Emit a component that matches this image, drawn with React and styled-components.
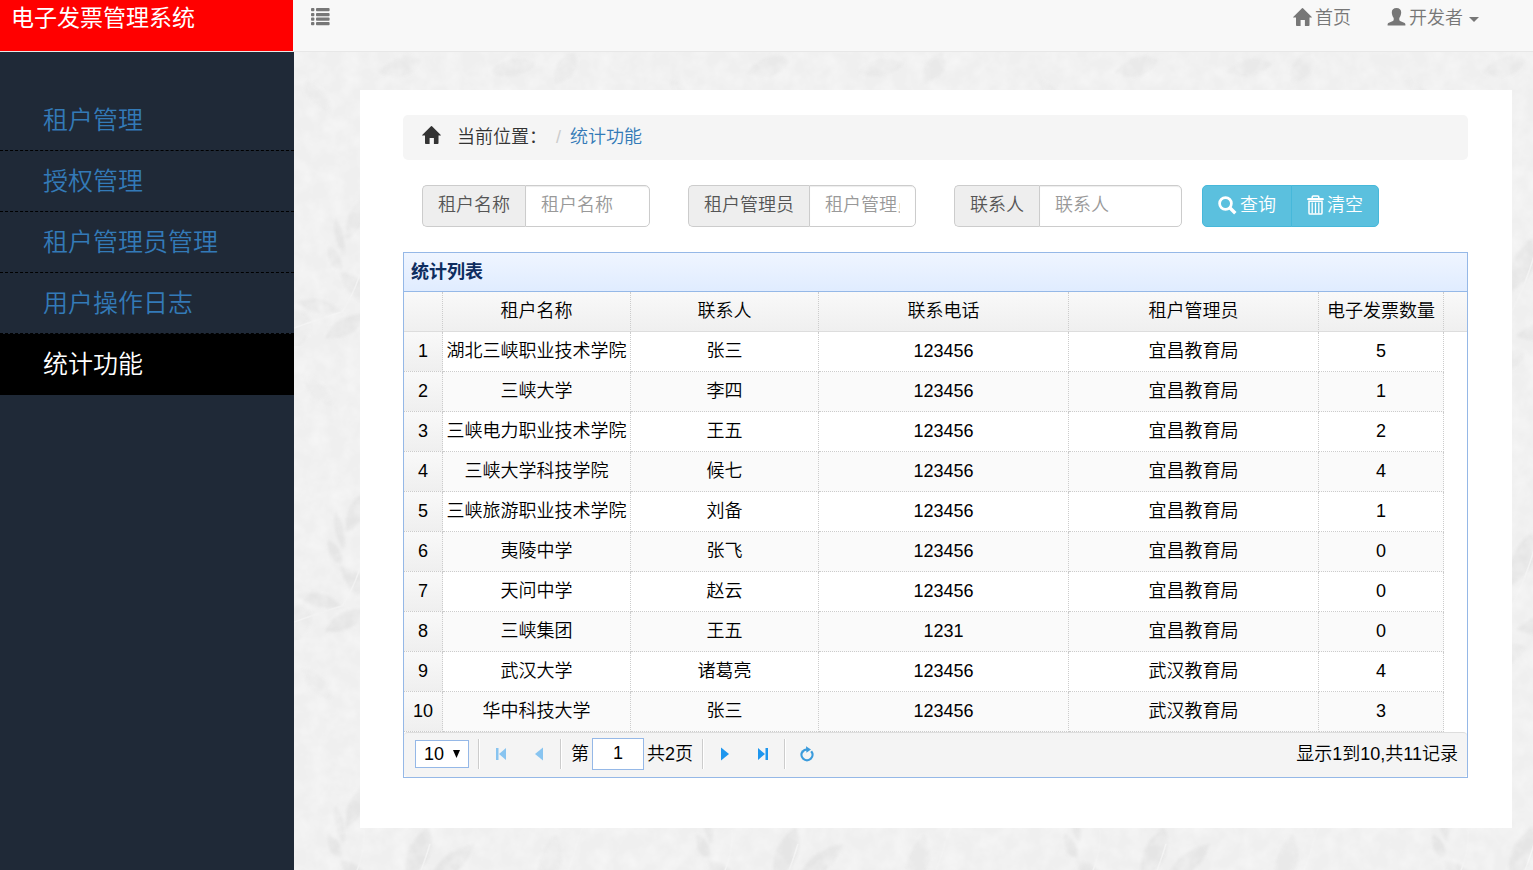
import React, { useState } from "react";
import styled, { createGlobalStyle } from "styled-components";

////////////////////////////////////////////////////////////////////////////////////////////
// Styles

const GlobalStyle = createGlobalStyle`
  * {
    box-sizing: border-box;
  }
  body {
    margin: 0;
    color: #333;
    font-family: "Liberation Sans", "Noto Sans CJK SC", sans-serif;
    font-size: 18px;
    font-weight: 350;
    line-height: 26px;
  }
  a {
    text-decoration: none;
  }
  button, input, select {
    font: inherit;
  }
`;

const Page = styled.div`
  display: flex;
  flex-direction: column;
  min-height: 100vh;
`;

const Header = styled.header`
  display: flex;
  height: 52px;
  background-color: #f8f8f8;
  border-bottom: 1px solid #e7e7e7;
`;

const Brand = styled.a`
  width: 293px;
  padding-left: 11px;
  background-color: #f00;
  color: #fff;
  font-size: 23px;
  font-weight: 400;
  line-height: 36px;
`;

const ToggleButton = styled.button`
  display: flex;
  align-items: center;
  height: 34px;
  padding: 0;
  margin-left: 18px;
  border: 0;
  background: none;
  color: #777;
`;

const TopNav = styled.nav`
  display: flex;
  align-items: flex-start;
  gap: 36px;
  margin-left: auto;
  padding-right: 54px;
`;

const TopLink = styled.a`
  display: flex;
  align-items: center;
  gap: 3px;
  color: #777;
  line-height: 36px;

  svg {
    margin-bottom: 3px;
  }
`;

const Caret = styled.span`
  margin-top: 2px;
  margin-left: 3px;
  border-top: 5px solid #777;
  border-left: 5px solid transparent;
  border-right: 5px solid transparent;
`;

const Body = styled.div`
  display: flex;
  flex: 1;
`;

const Sidebar = styled.nav`
  flex: 0 0 294px;
  padding-top: 38px;
  background-color: #1f2937;
`;

const MenuItem = styled.a`
  display: block;
  height: 61px;
  padding-left: 43px;
  border-bottom: 1px ${(props) => (props.$active ? "solid" : "dashed")} #000;
  background-color: ${(props) => (props.$active ? "#000" : "transparent")};
  color: ${(props) => (props.$active ? "#fff" : "#337ab7")};
  font-size: 25px;
  line-height: 61px;
`;

const Main = styled.main`
  position: relative;
  flex: 1;
  min-width: 0;
  padding: 38px 21px 42px 66px;
  background-color: #efefef;
`;

const Backdrop = styled.svg`
  position: absolute;
  inset: 0;
  width: 100%;
  height: 100%;
`;

const Card = styled.section`
  position: relative;
  padding: 25px 44px 50px 43px;
  background-color: #fff;
`;

const Breadcrumb = styled.div`
  display: flex;
  align-items: center;
  height: 45px;
  padding: 0 19px 2px;
  border-radius: 5px;
  background-color: #f5f5f5;

  svg {
    margin-bottom: 4px;
  }
`;

const Place = styled.span`
  margin-left: 16px;
`;

const Slash = styled.span`
  margin: 0 9px;
  color: #ccc;
`;

const PlaceLink = styled.a`
  color: #337ab7;
`;

const Filters = styled.form`
  display: flex;
  padding: 25px 19px;
`;

const Group = styled.div`
  display: flex;
  flex: 0 1 228px;
  min-width: 0;
  height: 42px;
  margin-right: ${(props) => (props.$last ? "20px" : "38px")};
`;

const Addon = styled.label`
  flex: none;
  padding: 0 15px;
  border: 1px solid #ccc;
  border-right: 0;
  border-radius: 5px 0 0 5px;
  background-color: #eee;
  color: #555;
  line-height: 38px;
`;

const Field = styled.input`
  flex: 1;
  min-width: 0;
  padding: 0 15px 2px;
  border: 1px solid #ccc;
  border-radius: 0 5px 5px 0;
  box-shadow: inset 0 1px 1px rgba(0, 0, 0, 0.075);
  color: #555;
  &::placeholder {
    color: #999;
    opacity: 1;
  }
`;

const Button = styled.button`
  display: flex;
  align-items: center;
  gap: 3px;
  height: 42px;
  padding: 0 15px 2px;
  border: 1px solid #46b8da;
  background-color: #5bc0de;
  color: #fff;
  &:first-child {
    border-radius: 5px 0 0 5px;
  }
  &:last-child {
    margin-left: -1px;
    border-radius: 0 5px 5px 0;
  }
`;

const ButtonGroup = styled.div`
  display: flex;
  flex: none;
`;

const Panel = styled.div`
  border: 1px solid #95b8e7;
`;

const PanelTitle = styled.h2`
  height: 39px;
  margin: 0;
  padding-left: 7px;
  border-bottom: 1px solid #95b8e7;
  background: linear-gradient(to bottom, #eff5ff, #e0ecff);
  color: #0e2d5f;
  font-size: 18px;
  font-weight: 700;
  line-height: 38px;
`;

const Table = styled.table`
  width: 100%;
  border-collapse: separate;
  border-spacing: 0;
  table-layout: fixed;
  color: #000;
`;

const Th = styled.th`
  height: 40px;
  padding: 0 0 2px;
  border-right: 1px dotted #ccc;
  border-bottom: 1px solid #ddd;
  font-weight: 350;
  white-space: nowrap;
  &:last-child {
    border-right: 0;
  }
`;

const HeadRow = styled.tr`
  background: linear-gradient(to bottom, #f9f9f9, #efefef);
`;

const Row = styled.tr`
  background-color: ${(props) => (props.$striped ? "#fafafa" : "#fff")};
`;

const Td = styled.td`
  height: 40px;
  padding: 0 0 2px;
  border-right: 1px dotted #ccc;
  border-bottom: 1px dotted #ccc;
  text-align: center;
  white-space: nowrap;
`;

const NumberCell = styled(Td)`
  background: linear-gradient(to bottom, #f9f9f9, #efefef);
`;

const Filler = styled.td`
  background-color: #fff;
`;

const Pager = styled.div`
  display: flex;
  align-items: center;
  height: 45px;
  padding: 0 9px 3px 11px;
  border-top: 1px solid #ddd;
  border-radius: 4px;
  background-color: #f4f4f4;
  color: #000;
`;

const SelectBox = styled.div`
  position: relative;
`;

const PageSize = styled.select`
  appearance: none;
  display: block;
  width: 54px;
  height: 28px;
  padding: 0 8px 2px;
  border: 1px solid #95b8e7;
  border-radius: 0;
  background-color: #fff;
  color: #000;
`;

const SelectArrow = styled.svg`
  position: absolute;
  top: 10px;
  right: 9px;
  pointer-events: none;
`;

const Separator = styled.span`
  width: 2px;
  height: 30px;
  margin: 0 9px;
  border-left: 1px solid #ccc;
  border-right: 1px solid #fff;
`;

const PageButton = styled.button`
  display: flex;
  align-items: center;
  justify-content: center;
  width: 24px;
  height: 30px;
  padding: 0;
  border: 0;
  background: none;
  color: #1e96ee;
  &:disabled {
    opacity: 0.5;
  }
  & + & {
    margin-left: 14px;
  }
`;

const PageInput = styled.input`
  width: 52px;
  height: 32px;
  margin: 0 3px;
  padding: 0;
  border: 1px solid #95b8e7;
  color: #000;
  text-align: center;
`;

const PageInfo = styled.span`
  margin-left: auto;
`;

////////////////////////////////////////////////////////////////////////////////////////////
// Icons

const HomeIcon = () => (
  <svg width="19" height="18" viewBox="0 0 19 18" fill="currentColor" aria-hidden="true">
    <path d="M9 .3q.5-.5 1 0L18.8 9q.4.6-.3.6h-2V17q0 .9-.8.9h-3.8v-5.8H7.6v5.8H3.8q-.8 0-.8-.9V9.600H.5q-.7 0-.3-.6z" />
  </svg>
);

const UserIcon = () => (
  <svg width="19" height="18" viewBox="0 0 18 18" fill="currentColor" aria-hidden="true">
    <path d="M9 0c3 0 4.700 1.700 4.700 4.300 0 2.200-.7 4.200-1.900 5.600v1.900c0 .6.300.9.800 1.100l4 1.800c.9.400 1.300.9 1.300 1.700V17.500H.1v-1.100c0-.8.400-1.300 1.300-1.700l4-1.800c.5-.2.800-.5.800-1.100V9.900C5 8.500 4.300 6.500 4.300 4.300 4.300 1.700 6 0 9 0z" />
  </svg>
);

const ListIcon = () => (
  <svg width="19" height="18" viewBox="0 0 19 18" fill="currentColor" aria-hidden="true">
    {[0, 5, 9.500, 14].map((y) => (
      <g key={y}>
        <rect x="0" y={y} width="3.400" height="3.200" rx="0.9" />
        <rect x="5" y={y} width="13.600" height="3.200" rx="0.9" />
      </g>
    ))}
  </svg>
);

const SearchIcon = () => (
  <svg width="19" height="19" viewBox="0 0 19 19" fill="none" stroke="currentColor" aria-hidden="true">
    <circle cx="7.500" cy="7.500" r="5.900" strokeWidth="2.700" />
    <path d="M11.800 11.800l5.500 5.500" strokeWidth="3.400" strokeLinecap="butt" />
  </svg>
);

const TrashIcon = () => (
  <svg width="17" height="20" viewBox="0 0 17 20" fill="none" stroke="currentColor" aria-hidden="true">
    <path d="M5.200 3V1.900q0-1 1-1h4.600q1 0 1 1V3" strokeWidth="1.500" />
    <path d="M.2 4.900V4q0-1 1-1h14.600q1 0 1 1v.9z" fill="currentColor" stroke="none" />
    <path d="M2 6.200v11.700q0 1.100 1.100 1.100h10.800q1.100 0 1.100-1.100V6.200z" strokeWidth="1.500" />
    <path d="M5.200 7.500v11M8.500 7.500v11M11.800 7.500v11" strokeWidth="1.300" />
  </svg>
);

const FirstIcon = () => (
  <svg width="12" height="14" viewBox="0 0 12 14" fill="currentColor" aria-hidden="true">
    <path d="M1 1h2.500v12H1zM11 1v12L4 7z" />
  </svg>
);

const PrevIcon = () => (
  <svg width="12" height="14" viewBox="0 0 12 14" fill="currentColor" aria-hidden="true">
    <path d="M10 .5v13L2 7z" />
  </svg>
);

const NextIcon = () => (
  <svg width="12" height="14" viewBox="0 0 12 14" fill="currentColor" aria-hidden="true">
    <path d="M2 .5v13L10 7z" />
  </svg>
);

const LastIcon = () => (
  <svg width="12" height="14" viewBox="0 0 12 14" fill="currentColor" aria-hidden="true">
    <path d="M8.500 1H11v12H8.500zM1 1v12l7-6z" />
  </svg>
);

const ReloadIcon = () => (
  <svg width="14" height="16" viewBox="0 0 14 16" fill="none" aria-hidden="true">
    <path d="M2.800 5.200A5.500 5.500 0 1 0 11.200 5.200" stroke="#3a9bdc" strokeWidth="2.300" />
    <path d="M2.400 5.800Q4.300 3.400 7.200 3.400" stroke="#3a9bdc" strokeWidth="2.200" />
    <path d="M6 .2l5 3.200-4.600 3.400z" fill="#3a9bdc" />
  </svg>
);

// pale leaf wallpaper that repeats behind the card
const Leaves = () => (
  <Backdrop aria-hidden="true">
    <defs>
      <filter id="paper" x="0" y="0" width="100%" height="100%">
        <feTurbulence type="fractalNoise" baseFrequency="0.06" numOctaves="3" seed="4" />
        <feColorMatrix values="0 0 0 0 0.97  0 0 0 0 0.97  0 0 0 0 0.97  0.9 0 0 0 -0.3" />
      </filter>
      <filter id="soft">
        <feGaussianBlur stdDeviation="1.800" />
      </filter>
      <pattern id="leaves" width="368" height="294" patternUnits="userSpaceOnUse">
        <g filter="url(#soft)" fill="#e5e5e5">
          <path d="M3 249q28-8 45 12q-30 4-45-12z" />
          <path d="M31 286q8-22 38-24q-4 26-38 24z" />
          <path d="M41 166q12 12 9 38q-12-16-9-38z" />
          <path d="M34 194q14 6 14 22q-14 4-14-22z" />
          <path d="M52 188q-2-30 18-42q8 26-18 42z" />
          <path d="M46 220q6 30 32 32q-4-28-32-32z" />
          <path d="M0 258q18 2 18 18q-12 20-18 26z" fill="#e9e9e9" />
          <path d="M8 28q26 6 30 32q-24-4-30-32z" fill="#ebebeb" />
          <path d="M84 20q24-24 44-12q-14 26-44 12z" fill="#e9e9e9" />
          <path d="M112 240q-6-32 22-54q14 32-22 54z" />
          <path d="M136 238q12-28 44-34q-10 34-44 34z" />
          <path d="M104 254q-24-24-52-18q18 26 52 18z" fill="#e9e9e9" />
          <path d="M118 284q34-30 62-12q-26 26-62 12z" />
          <path d="M196 20q24-22 46-8q-20 20-46 8z" fill="#e9e9e9" />
          <path d="M246 250q-8-32 16-56q18 32-16 56z" fill="#e9e9e9" />
          <path d="M262 32q-6-24 18-32q12 22-18 32z" fill="#e9e9e9" />
          <path d="M270 276q10-28 44-30q-12 30-44 30z" fill="#e8e8e8" />
          <path d="M230 130q20-30 52-18q-20 28-52 18z" />
          <path d="M290 110q4-30 34-36q0 30-34 36z" />
          <path d="M296 140q28-12 48 8q-28 14-48-8z" />
        </g>
        <g fill="none" stroke="#f1f1f1" strokeWidth="1.500">
          <path d="M0 276q28-10 48-16q24-38 22-70" />
          <path d="M90 294q28-30 46-90" />
          <path d="M240 294q24-32 40-80q12-50 50-80" />
        </g>
      </pattern>
    </defs>
    <rect width="100%" height="100%" fill="url(#leaves)" />
    <rect width="100%" height="100%" filter="url(#paper)" />
  </Backdrop>
);

////////////////////////////////////////////////////////////////////////////////////////////

const menu = ["租户管理", "授权管理", "租户管理员管理", "用户操作日志", "统计功能"];

const filters = [
  { id: "tenant", label: "租户名称" },
  { id: "manager", label: "租户管理员" },
  { id: "contact", label: "联系人" },
];

const columns = ["租户名称", "联系人", "联系电话", "租户管理员", "电子发票数量"];

const rows = [
  ["湖北三峡职业技术学院", "张三", "123456", "宜昌教育局", 5],
  ["三峡大学", "李四", "123456", "宜昌教育局", 1],
  ["三峡电力职业技术学院", "王五", "123456", "宜昌教育局", 2],
  ["三峡大学科技学院", "候七", "123456", "宜昌教育局", 4],
  ["三峡旅游职业技术学院", "刘备", "123456", "宜昌教育局", 1],
  ["夷陵中学", "张飞", "123456", "宜昌教育局", 0],
  ["天问中学", "赵云", "123456", "宜昌教育局", 0],
  ["三峡集团", "王五", "1231", "宜昌教育局", 0],
  ["武汉大学", "诸葛亮", "123456", "武汉教育局", 4],
  ["华中科技大学", "张三", "123456", "武汉教育局", 3],
];

function DataGrid() {
  return (
    <Table>
      <colgroup>
        <col width="39" />
        <col width="188" />
        <col width="188" />
        <col width="250" />
        <col width="250" />
        <col width="125" />
        <col />
      </colgroup>
      <thead>
        <HeadRow>
          <Th />
          {columns.map((c) => (
            <Th key={c} scope="col">{c}</Th>
          ))}
          <Th />
        </HeadRow>
      </thead>
      <tbody>
        {rows.map((row, i) => (
          <Row key={i} $striped={i % 2 === 1}>
            <NumberCell>{i + 1}</NumberCell>
            {row.map((value, j) => (
              <Td key={j}>{value}</Td>
            ))}
            <Filler />
          </Row>
        ))}
      </tbody>
    </Table>
  );
}

function Pagination() {
  const [page, setPage] = useState("1");

  return (
    <Pager>
      <SelectBox>
        <PageSize aria-label="每页记录数" defaultValue="10">
          <option>10</option>
          <option>20</option>
          <option>50</option>
        </PageSize>
        <SelectArrow width="7" height="8" viewBox="0 0 7 8" aria-hidden="true">
          <path d="M0 0h7L3.500 8z" />
        </SelectArrow>
      </SelectBox>
      <Separator />
      <PageButton type="button" aria-label="首页" disabled><FirstIcon /></PageButton>
      <PageButton type="button" aria-label="上一页" disabled><PrevIcon /></PageButton>
      <Separator />
      <label htmlFor="page">第</label>
      <PageInput id="page" value={page} onChange={(e) => setPage(e.target.value)} />
      <span>共2页</span>
      <Separator />
      <PageButton type="button" aria-label="下一页"><NextIcon /></PageButton>
      <PageButton type="button" aria-label="末页"><LastIcon /></PageButton>
      <Separator />
      <PageButton type="button" aria-label="刷新"><ReloadIcon /></PageButton>
      <PageInfo>显示1到10,共11记录</PageInfo>
    </Pager>
  );
}

export default function App() {
  return (
    <Page>
      <GlobalStyle />
      <Header>
        <Brand href="#">电子发票管理系统</Brand>
        <ToggleButton type="button" aria-label="菜单"><ListIcon /></ToggleButton>
        <TopNav>
          <TopLink href="#"><HomeIcon />首页</TopLink>
          <TopLink href="#"><UserIcon />开发者<Caret /></TopLink>
        </TopNav>
      </Header>
      <Body>
        <Sidebar>
          {menu.map((item) => (
            <MenuItem key={item} href="#" $active={item === "统计功能"}>{item}</MenuItem>
          ))}
        </Sidebar>
        <Main>
          <Leaves />
          <Card>
            <Breadcrumb>
              <HomeIcon />
              <Place>当前位置：</Place>
              <Slash>/</Slash>
              <PlaceLink href="#">统计功能</PlaceLink>
            </Breadcrumb>
            <Filters onSubmit={(e) => e.preventDefault()}>
              {filters.map((f, i) => (
                <Group key={f.id} $last={i === filters.length - 1}>
                  <Addon htmlFor={f.id}>{f.label}</Addon>
                  <Field id={f.id} type="text" placeholder={f.label} />
                </Group>
              ))}
              <ButtonGroup>
                <Button type="submit"><SearchIcon />查询</Button>
                <Button type="reset"><TrashIcon />清空</Button>
              </ButtonGroup>
            </Filters>
            <Panel>
              <PanelTitle>统计列表</PanelTitle>
              <DataGrid />
              <Pagination />
            </Panel>
          </Card>
        </Main>
      </Body>
    </Page>
  );
}
